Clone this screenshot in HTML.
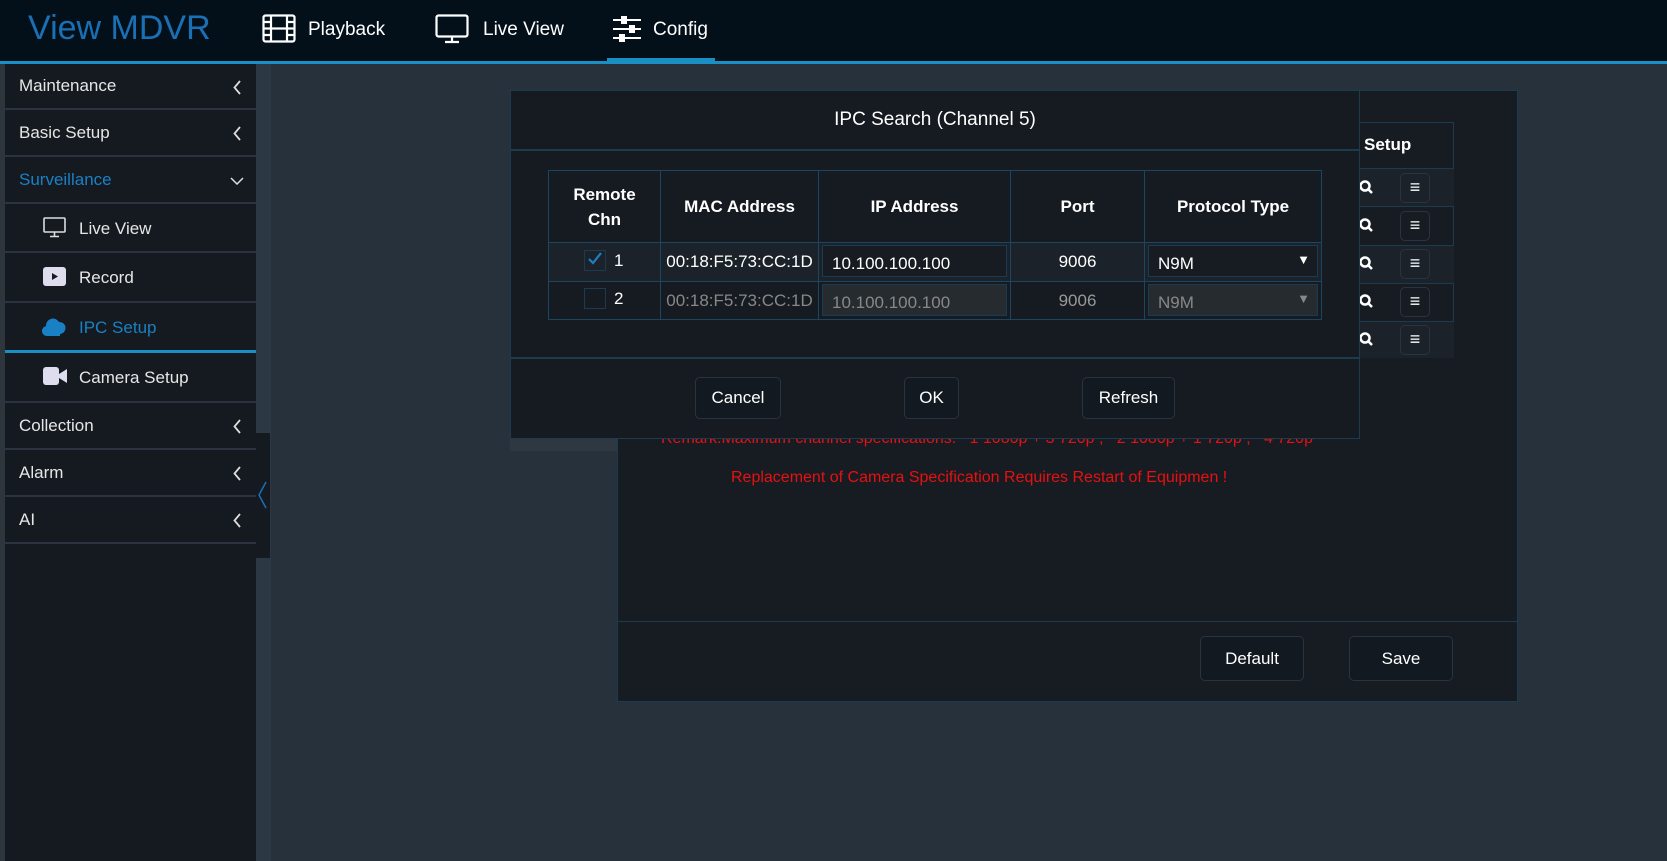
<!DOCTYPE html>
<html><head><meta charset="utf-8"><style>
*{box-sizing:border-box;margin:0;padding:0}
body{width:1667px;height:861px;overflow:hidden;background:#27313b;font-family:"Liberation Sans",sans-serif;color:#fff;position:relative}
.abs{position:absolute}
.top{left:0;top:0;width:1667px;height:61px;background:#03101a}
.blue{left:0;top:61px;width:1667px;height:3px;background:#1a8fc4}
.nav{font-size:19px;color:#fff;top:19px}
.side{left:5px;top:64px;width:251px;height:797px;background:#151a20}
.item{position:absolute;left:0;width:251px;border-bottom:2px solid #2a333f;font-size:17px;color:#e6e6e6}
.item span{position:absolute;left:14px}
.sub span{left:74px}
.chev{position:absolute;right:15px;top:16px}
.bd{border:1px solid #1c3b50}
.btn{position:absolute;background:#121920;border:1px solid #2a343e;border-radius:5px;color:#fff;font-size:17px;text-align:center}
th,td{border:1px solid #1b4560;text-align:center;font-size:17px}
th{font-weight:bold}
.inp{position:absolute;height:32px;border:1px solid #1c3b50;font-size:17px;padding:8px 0 0 9px}
</style></head><body>
<div class="abs top"></div>
<div class="abs blue"></div>
<div class="abs" style="left:607px;top:58px;width:108px;height:4px;background:#1a8fc4"></div>
<div class="abs" style="left:28px;top:9px;font-size:34px;color:#1a6fb5">View MDVR</div>
<svg class="abs" style="left:262px;top:14px" width="34" height="29" viewBox="0 0 34 29" fill="none" stroke="#fff" stroke-width="2.2"><rect x="1.5" y="1.5" width="31" height="26" rx="2"/><path d="M9 1.5v26M25 1.5v26M1.5 8h7.5M1.5 14.5h31M1.5 21h7.5M25 8h7.5M25 21h7.5"/></svg>
<div class="abs nav" style="left:308px">Playback</div>
<svg class="abs" style="left:435px;top:14px" width="34" height="30" viewBox="0 0 34 30" fill="none" stroke="#fff" stroke-width="2.2"><rect x="1.5" y="1.5" width="31" height="21" rx="2"/><path d="M17 23v5M10 28h14"/></svg>
<div class="abs nav" style="left:483px">Live View</div>
<svg class="abs" style="left:613px;top:16px" width="28" height="26" viewBox="0 0 28 26" fill="#fff"><rect x="0" y="3" width="28" height="2"/><rect x="8" y="0" width="6" height="8"/><rect x="0" y="12" width="28" height="2"/><rect x="16" y="9" width="6" height="8"/><rect x="0" y="21" width="28" height="2"/><rect x="6" y="18" width="6" height="8"/></svg>
<div class="abs nav" style="left:653px">Config</div>

<div class="abs" style="left:0;top:64px;width:5px;height:797px;background:#2e353c"></div>
<div class="abs side">
 <div class="item" style="top:0;height:46px"><span style="top:12px">Maintenance</span><svg class="chev" width="8" height="15" viewBox="0 0 8 15" fill="none" stroke="#ddd" stroke-width="1.8"><path d="M7 1L1.5 7.5 7 14"/></svg></div>
 <div class="item" style="top:46px;height:47px"><span style="top:13px">Basic Setup</span><svg class="chev" width="8" height="15" viewBox="0 0 8 15" fill="none" stroke="#ddd" stroke-width="1.8"><path d="M7 1L1.5 7.5 7 14"/></svg></div>
 <div class="item" style="top:93px;height:47px"><span style="top:13px;color:#1a80c4">Surveillance</span><svg class="chev" style="right:12px;top:20px" width="14" height="8" viewBox="0 0 14 8" fill="none" stroke="#ddd" stroke-width="1.5"><path d="M1 1l6 6 6-6"/></svg></div>
 <div class="item sub" style="top:140px;height:49px"><svg class="abs" style="left:38px;top:13px" width="23" height="21" viewBox="0 0 23 21" fill="none" stroke="#ddd" stroke-width="1.6"><rect x="1" y="1" width="21" height="14" rx="1"/><path d="M11.5 15v4M7 19.5h9"/></svg><span style="top:15px">Live View</span></div>
 <div class="item sub" style="top:189px;height:50px"><svg class="abs" style="left:38px;top:14px" width="23" height="19" viewBox="0 0 23 19"><rect x="0" y="0" width="23" height="19" rx="3" fill="#dde"/><path d="M9 6l6 3.5-6 3.5z" fill="#151a20"/></svg><span style="top:15px">Record</span></div>
 <div class="item sub" style="top:239px;height:50px;border-bottom:3px solid #1a8fc4"><svg class="abs" style="left:37px;top:13px" width="24" height="20" viewBox="0 0 24 20"><path d="M5 20a5 5 0 0 1-1-9.9A7 7 0 0 1 17 6a6 6 0 0 1 1 12v2z" fill="#1a80c4"/></svg><span style="top:15px;color:#1a80c4">IPC Setup</span></div>
 <div class="item sub" style="top:289px;height:50px"><svg class="abs" style="left:38px;top:14px" width="24" height="18" viewBox="0 0 24 18"><rect x="0" y="0" width="16" height="18" rx="3" fill="#dde"/><path d="M16 7l8-5v14l-8-5z" fill="#dde"/></svg><span style="top:15px">Camera Setup</span></div>
 <div class="item" style="top:339px;height:47px"><span style="top:13px">Collection</span><svg class="chev" width="8" height="15" viewBox="0 0 8 15" fill="none" stroke="#ddd" stroke-width="1.8"><path d="M7 1L1.5 7.5 7 14"/></svg></div>
 <div class="item" style="top:386px;height:47px"><span style="top:13px">Alarm</span><svg class="chev" width="8" height="15" viewBox="0 0 8 15" fill="none" stroke="#ddd" stroke-width="1.8"><path d="M7 1L1.5 7.5 7 14"/></svg></div>
 <div class="item" style="top:433px;height:47px"><span style="top:13px">AI</span><svg class="chev" width="8" height="15" viewBox="0 0 8 15" fill="none" stroke="#ddd" stroke-width="1.8"><path d="M7 1L1.5 7.5 7 14"/></svg></div>
</div>
<div class="abs" style="left:256px;top:64px;width:15px;height:797px;background:#2c3843"></div>
<div class="abs" style="left:256px;top:433px;width:14px;height:125px;background:#151a20"></div>
<svg class="abs" style="left:257px;top:480px" width="10" height="30" viewBox="0 0 10 30" fill="none" stroke="#1a6fb5" stroke-width="1.5"><path d="M9 2L2 15l7 13"/></svg>

<!-- background panel -->
<div class="abs bd" style="left:617px;top:90px;width:901px;height:612px;background:#161c22"></div>
<div class="abs" style="left:618px;top:621px;width:899px;height:1px;background:#1c3b50"></div>
<div class="btn" style="left:1200px;top:636px;width:104px;height:45px;line-height:43px">Default</div>
<div class="btn" style="left:1349px;top:636px;width:104px;height:45px;line-height:43px">Save</div>
<div class="abs bd" style="left:1339px;top:122px;width:115px;height:236px;background:#161c22"></div>
<div class="abs" style="left:1364px;top:135px;font-size:17px;font-weight:bold">Setup</div>
<div class="abs" style="left:1340px;top:168px;width:114px;height:38px;background:#1b2229;border-top:1px solid #1c3b50"></div>
<div class="abs" style="left:1340px;top:206px;width:114px;height:39px;border-top:1px solid #1c3b50"></div>
<div class="abs" style="left:1340px;top:245px;width:114px;height:38px;background:#1b2229;border-top:1px solid #1c3b50"></div>
<div class="abs" style="left:1340px;top:283px;width:114px;height:38px;border-top:1px solid #1c3b50"></div>
<div class="abs" style="left:1340px;top:321px;width:114px;height:37px;background:#1b2229;border-top:1px solid #1c3b50"></div>
<div class="abs" style="left:1400px;top:173px;width:30px;height:30px;border:1px solid #2a343e;border-radius:5px;font-size:18px;text-align:center;line-height:27px">&#8801;</div>
<div class="abs" style="left:1400px;top:211px;width:30px;height:30px;border:1px solid #2a343e;border-radius:5px;font-size:18px;text-align:center;line-height:27px">&#8801;</div>
<div class="abs" style="left:1400px;top:249px;width:30px;height:30px;border:1px solid #2a343e;border-radius:5px;font-size:18px;text-align:center;line-height:27px">&#8801;</div>
<div class="abs" style="left:1400px;top:287px;width:30px;height:30px;border:1px solid #2a343e;border-radius:5px;font-size:18px;text-align:center;line-height:27px">&#8801;</div>
<div class="abs" style="left:1400px;top:325px;width:30px;height:30px;border:1px solid #2a343e;border-radius:5px;font-size:18px;text-align:center;line-height:27px">&#8801;</div>
<svg class="abs" style="left:1360px;top:178px" width="14" height="170" viewBox="0 0 14 170" fill="none" stroke="#fff" stroke-width="2.5"><g><circle cx="5" cy="8" r="4.5"/><path d="M8 11l4 4"/></g><g transform="translate(0,38)"><circle cx="5" cy="8" r="4.5"/><path d="M8 11l4 4"/></g><g transform="translate(0,76)"><circle cx="5" cy="8" r="4.5"/><path d="M8 11l4 4"/></g><g transform="translate(0,114)"><circle cx="5" cy="8" r="4.5"/><path d="M8 11l4 4"/></g><g transform="translate(0,152)"><circle cx="5" cy="8" r="4.5"/><path d="M8 11l4 4"/></g></svg>
<div class="abs" style="left:661px;top:430px;font-size:16px;color:#e81010;white-space:nowrap">Remark:Maximum channel specifications:&nbsp;&nbsp;&nbsp;1 1080p + 3 720p ;&nbsp;&nbsp;&nbsp;2 1080p + 1 720p ;&nbsp;&nbsp;&nbsp;4 720p</div>
<div class="abs" style="left:731px;top:469px;font-size:16px;color:#e81010;white-space:nowrap">Replacement of Camera Specification Requires Restart of Equipmen !</div>

<!-- dialog -->
<div class="abs" style="left:510px;top:438px;width:107px;height:13px;background:#2f3841"></div>
<div class="abs bd" style="left:510px;top:90px;width:850px;height:349px;background:#151b21"></div>
<div class="abs" style="left:510px;top:109px;width:850px;text-align:center;font-size:19px">IPC Search (Channel 5)</div>
<div class="abs" style="left:511px;top:149px;width:848px;height:2px;background:#1c3b50"></div>
<div class="abs" style="left:511px;top:357px;width:848px;height:2px;background:#1c3b50"></div>
<table class="abs" style="left:548px;top:170px;width:774px;border-collapse:collapse;background:#151b21">
<tr style="height:72px"><th style="width:112px;line-height:25px">Remote<br>Chn</th><th style="width:158px">MAC Address</th><th style="width:192px">IP Address</th><th style="width:134px">Port</th><th>Protocol Type</th></tr>
<tr style="height:39px;background:#1b2229"><td></td><td>00:18:F5:73:CC:1D</td><td></td><td>9006</td><td></td></tr>
<tr style="height:38px"><td></td><td style="color:#888">00:18:F5:73:CC:1D</td><td></td><td style="color:#999">9006</td><td></td></tr>
</table>
<div class="abs" style="left:584px;top:250px;width:22px;height:21px;border:1px solid #1c3b50"></div>
<svg class="abs" style="left:587px;top:252px" width="16" height="14" viewBox="0 0 16 14" fill="none" stroke="#1a80c4" stroke-width="2.2"><path d="M2 7l4 4 8-10"/></svg>
<div class="abs" style="left:614px;top:251px;font-size:17px">1</div>
<div class="abs" style="left:584px;top:288px;width:22px;height:21px;border:1px solid #1c3b50"></div>
<div class="abs" style="left:614px;top:289px;font-size:17px">2</div>
<div class="inp" style="left:822px;top:245px;width:185px;color:#fff;background:#161c22">10.100.100.100</div>
<div class="inp" style="left:822px;top:284px;width:185px;color:#888;background:#262b30">10.100.100.100</div>
<div class="inp" style="left:1148px;top:245px;width:170px;color:#fff;background:#161c22">N9M<span style="position:absolute;right:7px;top:6px;font-size:13px">&#9660;</span></div>
<div class="inp" style="left:1148px;top:284px;width:170px;color:#888;background:#262b30">N9M<span style="position:absolute;right:7px;top:6px;font-size:13px">&#9660;</span></div>
<div class="btn" style="left:695px;top:377px;width:86px;height:42px;line-height:40px">Cancel</div>
<div class="btn" style="left:904px;top:377px;width:55px;height:42px;line-height:40px">OK</div>
<div class="btn" style="left:1082px;top:377px;width:93px;height:42px;line-height:40px">Refresh</div>
</body></html>
